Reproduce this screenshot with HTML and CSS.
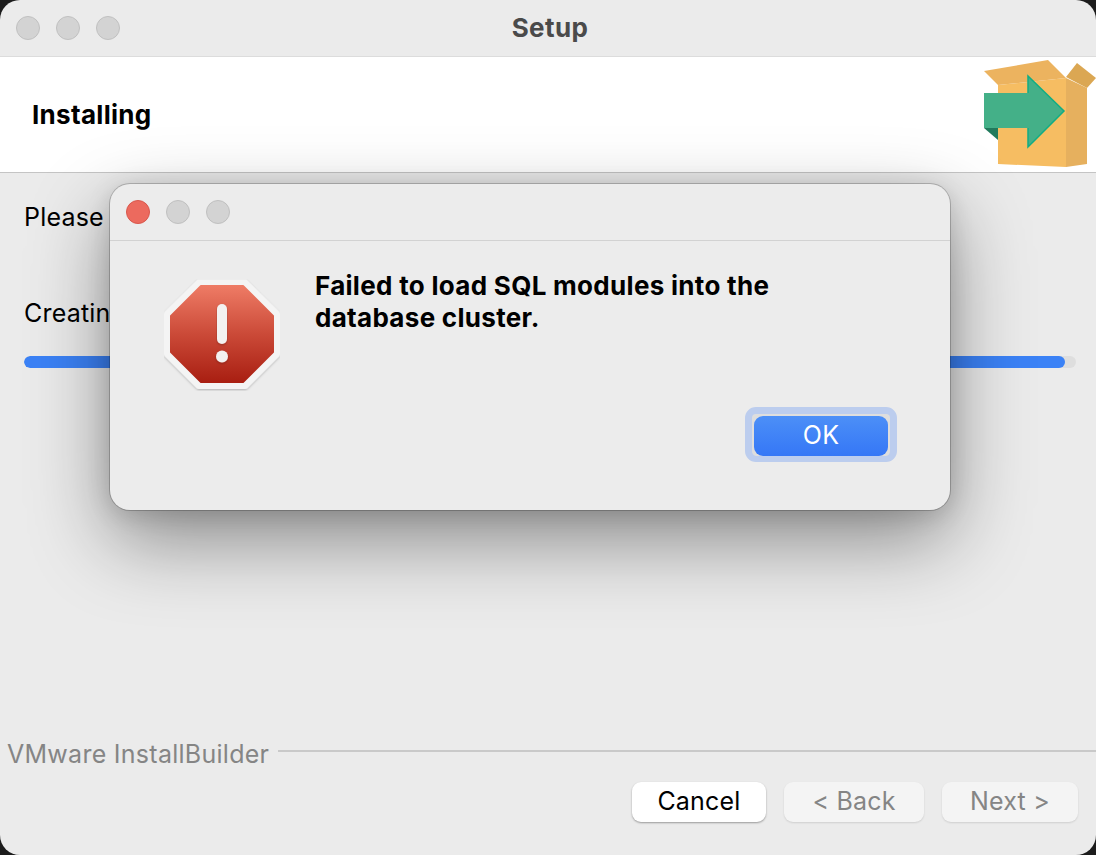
FILE: index.html
```html
<!DOCTYPE html>
<html>
<head lang="en">
    <meta charset="UTF-8">
    <title>Setup</title>
    <link rel="stylesheet" href="styles.css">
</head>
<body>
<div class="window">
    <div class="titlebar">
        <div class="lights">
            <span class="light"></span>
            <span class="light"></span>
            <span class="light"></span>
        </div>
        <div class="title">Setup</div>
    </div>
    <div class="header">
        <div class="heading">Installing</div>
        <svg class="box-icon" viewBox="980 57 116 115" width="116" height="115">
            <polygon points="998,85 1066,78 1066,167 998,164" fill="#f6bd62"/>
            <polygon points="1066,78 1087,88 1087,164 1066,167" fill="#e6b05e"/>
            <polygon points="984,71 1048,60 1066,78 998,85" fill="#ecb35f"/>
            <polygon points="1066,77 1077,63 1096,78 1087,88" fill="#dba753"/>
            <polygon points="984,128 998,128 998,140" fill="#217a5c"/>
            <polygon points="984,93 1028,93 1028,76 1064,111 1028,147 1028,128 984,128" fill="#44b088"/>
            <polyline points="1028,93 1028,76 1064,111 1028,147 1028,128" fill="none" stroke="#10ad84" stroke-width="1.5"/>
        </svg>
    </div>
    <div class="content">
        <div class="message">Please wait while Setup installs the application</div>
        <div class="status">Creating database cluster</div>
        <div class="progress"><div class="progress-fill"></div></div>
    </div>
    <div class="footer">
        <div class="brand-row">
            <span class="brand">VMware InstallBuilder</span>
            <span class="rule"></span>
        </div>
        <div class="buttons">
            <a class="btn">Cancel</a>
            <a class="btn disabled back">&lt; Back</a>
            <a class="btn disabled next">Next &gt;</a>
        </div>
    </div>
</div>

<div class="dialog">
    <div class="dialog-bar">
        <div class="lights">
            <span class="light red"></span>
            <span class="light"></span>
            <span class="light"></span>
        </div>
    </div>
    <div class="dialog-body">
        <svg class="stop-icon" viewBox="164 279 116 112" width="116" height="112">
            <defs>
                <linearGradient id="red" x1="0" y1="0" x2="0" y2="1">
                    <stop offset="0" stop-color="#ee7b65"/>
                    <stop offset="0.5" stop-color="#cb4a38"/>
                    <stop offset="1" stop-color="#a91f12"/>
                </linearGradient>
                <filter id="soft" x="-10%" y="-10%" width="120%" height="125%">
                    <feDropShadow dx="0" dy="1" stdDeviation="1" flood-color="#000" flood-opacity=".25"/>
                </filter>
            </defs>
            <polygon points="199,283 245,283 276.500,314 276.500,354 245,385.500 199,385.500 167.500,354 167.500,314" fill="#f4f4f4" stroke="#f4f4f4" stroke-linejoin="round" stroke-width="7" filter="url(#soft)"/>
            <polygon points="201,286 243,286 273,316 273,352 243,382 201,382 171,352 171,316" fill="url(#red)" stroke="url(#red)" stroke-linejoin="round" stroke-width="2"/>
            <rect x="217" y="304" width="10" height="40" rx="5" fill="#f3f1f0" filter="url(#soft)"/>
            <circle cx="222" cy="356.500" r="6" fill="#f3f1f0" filter="url(#soft)"/>
        </svg>
        <div class="dialog-text">Failed to load SQL modules into the database cluster.</div>
    </div>
    <div class="dialog-actions">
        <div class="focus-ring"><a class="btn-ok">OK</a></div>
    </div>
</div>
</body>
</html>
```

FILE: styles.css
```css
* {
    margin: 0;
    padding: 0;
    box-sizing: border-box;
}

html, body {
    height: 855px;
    overflow: hidden;
    background: #1c1c1c;
}

body {
    font-family: "Inter", "Liberation Sans", sans-serif;
    color: #000;
    position: relative;
    letter-spacing: .2px;
}

.window {
    height: 855px;
    border-radius: 20px;
    overflow: hidden;
    background: #ebebeb;
    display: flex;
    flex-direction: column;
}

.titlebar {
    height: 57px;
    flex-shrink: 0;
    position: relative;
    border-bottom: 1px solid #dcdcdc;
    display: flex;
    align-items: center;
    justify-content: center;
    padding: 0 0 2px 4px;
}

.title {
    font-size: 26px;
    font-weight: 700;
    letter-spacing: .4px;
    color: #4a4a4a;
}

.lights {
    display: flex;
    gap: 16px;
}

.titlebar .lights {
    position: absolute;
    left: 16px;
    top: 16px;
}

.light {
    width: 24px;
    height: 24px;
    border-radius: 50%;
    background: #d3d3d3;
    border: 1px solid #c0c0c0;
}

.light.red {
    background: #ec6a5e;
    border-color: #d9574c;
}

.header {
    height: 116px;
    flex-shrink: 0;
    background: #fff;
    border-bottom: 1px solid #c4c4c4;
    display: flex;
    align-items: center;
    justify-content: space-between;
    padding-left: 32px;
}

.heading {
    font-size: 26px;
    font-weight: 700;
    letter-spacing: .3px;
}

.box-icon {
    display: block;
}

.content {
    flex: 1;
    padding: 27px 20px 0 24px;
    font-size: 25px;
}

.message {
    height: 34px;
    line-height: 34px;
    white-space: nowrap;
}

.status {
    margin-top: 62px;
    height: 34px;
    line-height: 34px;
    white-space: nowrap;
}

.progress {
    margin-top: 26px;
    height: 12px;
    border-radius: 6px;
    background: #dedede;
    overflow: hidden;
}

.progress-fill {
    width: 1041px;
    height: 12px;
    border-radius: 6px;
    background: #3b82f6;
}

.footer {
    height: 105px;
    flex-shrink: 0;
    padding-bottom: 33px;
    display: flex;
    flex-direction: column;
    justify-content: space-between;
}

.brand-row {
    display: flex;
    align-items: flex-start;
    gap: 9px;
    padding-left: 7px;
}

.brand {
    font-size: 25px;
    letter-spacing: .27px;
    color: #858585;
    line-height: 30px;
    margin-top: -11px;
    white-space: nowrap;
}

.rule {
    flex: 1;
    height: 2px;
    background: #c9c9c9;
}

.buttons {
    display: flex;
    justify-content: flex-end;
    gap: 18px;
    padding-right: 18px;
}

.btn {
    width: 134px;
    height: 40px;
    line-height: 39px;
    text-align: center;
    font-size: 25px;
    background: #fff;
    border-radius: 9px;
    box-shadow: 0 1px 2px rgba(0, 0, 0, .35);
}

.btn.disabled {
    color: #858585;
    background: #f4f4f4;
    box-shadow: 0 1px 2px rgba(0, 0, 0, .12);
}

.btn.back {
    width: 140px;
}

.btn.next {
    width: 136px;
}

.dialog {
    position: absolute;
    left: 110px;
    top: 184px;
    width: 840px;
    height: 326px;
    background: #ececec;
    border-radius: 20px;
    box-shadow: 0 0 0 1px rgba(0, 0, 0, .2), 0 30px 80px rgba(0, 0, 0, .42), 0 4px 24px rgba(0, 0, 0, .14);
    display: flex;
    flex-direction: column;
}

.dialog-bar {
    height: 57px;
    flex-shrink: 0;
    border-bottom: 1px solid #d2d2d2;
    padding: 16px;
}

.dialog-body {
    display: flex;
    gap: 35px;
    padding: 38px 54px 0;
    height: 166px;
}

.stop-icon {
    display: block;
    flex-shrink: 0;
}

.dialog-text {
    font-size: 26px;
    font-weight: 700;
    letter-spacing: .3px;
    line-height: 32px;
    width: 480px;
    margin-top: -9px;
}

.dialog-actions {
    display: flex;
    justify-content: flex-end;
    padding-right: 53px;
}

.focus-ring {
    width: 152px;
    height: 55px;
    border-radius: 11px;
    background: #dedede;
    border: 7px solid #bccdee;
    border-bottom-width: 6px;
    padding: 2px 2px 0;
}

.btn-ok {
    display: block;
    height: 40px;
    line-height: 39px;
    text-align: center;
    font-size: 25px;
    color: #fff;
    border-radius: 9px;
    background: linear-gradient(#4c8ff7, #3577f6);
}
```
